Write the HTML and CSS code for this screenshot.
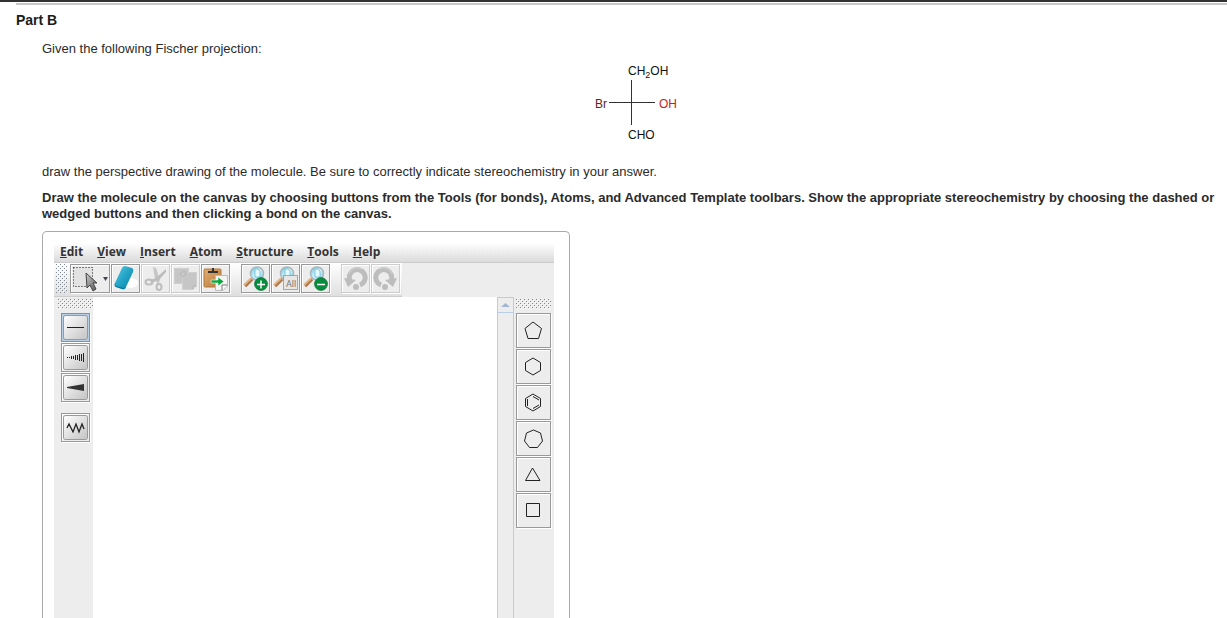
FILE: index.html
```html
<!DOCTYPE html>
<html lang="en">
  <head>
    <meta charset="UTF-8">
    <meta name="viewport" content="width=device-width, initial-scale=1">
    <title>Part B</title>
    <link rel="stylesheet" href="styles.css">
  </head>
  <body>
    <!-- shared symbols -->
    <svg class="defs" width="0" height="0" aria-hidden="true">
      <defs>
        <pattern id="dots" width="4" height="4" patternUnits="userSpaceOnUse">
          <rect width="1" height="1" fill="#7f8994" />
          <rect x="2" y="2" width="1" height="1" fill="#7f8994" />
          <rect x="1" y="1" width="1" height="1" fill="#fff" />
          <rect x="3" y="3" width="1" height="1" fill="#fff" />
        </pattern>
        <linearGradient id="blue" x1="0" y1="0" x2="1" y2="1">
          <stop offset="0" stop-color="#5cc8e2" />
          <stop offset="0.5" stop-color="#22a4c6" />
          <stop offset="1" stop-color="#0a7ea0" />
        </linearGradient>
        <linearGradient id="glass" x1="0" y1="0" x2="1" y2="1">
          <stop offset="0" stop-color="#6fc4dc" />
          <stop offset="0.5" stop-color="#d3f3fb" />
          <stop offset="1" stop-color="#7ccfe6" />
        </linearGradient>
        <linearGradient id="wood" x1="0" y1="0" x2="1" y2="1">
          <stop offset="0" stop-color="#e3ac70" />
          <stop offset="1" stop-color="#b87838" />
        </linearGradient>
        <linearGradient id="arrow" x1="0" y1="0" x2="1" y2="1">
          <stop offset="0" stop-color="#ccc" />
          <stop offset="1" stop-color="#555" />
        </linearGradient>
        <symbol id="lens" viewBox="0 0 27 27">
          <path d="M3 21L10 14" stroke="#a87850" stroke-width="3.500" />
          <path d="M2 20L9 13.500" stroke="#e6b27c" stroke-width="2" />
          <circle cx="15" cy="8.500" r="6.500" fill="url(#glass)" stroke="#a9b6bb" stroke-width="1.500" />
          <path d="M13 4h3l2 2v6h-5z" fill="#e4faff" stroke="#58b4d0" stroke-width=".7" />
        </symbol>
        <symbol id="turn" viewBox="0 0 27 27">
          <path d="M8 16A8 8 0 1 1 18 20" fill="none" stroke="#bdbdbd" stroke-width="5" />
          <path d="M2 13L14 15L6 22Z" fill="#bdbdbd" />
          <circle cx="14" cy="22" r="3" fill="#bdbdbd" />
          <path d="M7 9A9 9 0 0 1 20 4" fill="none" stroke="#d2d2d2" />
        </symbol>
      </defs>
    </svg>

    <div class="topline"></div>
    <main class="part">
      <h2 class="part-title">Part B</h2>
      <div class="question">
        <p>Given the following Fischer projection:</p>
        <svg class="molecule" viewBox="0 0 90 96" role="img" aria-label="Fischer projection">
          <path d="M41.500 23V68M19 45.500H65" stroke="#333" />
          <text x="38" y="18">CH<tspan class="sub" dy="3">2</tspan><tspan dy="-3">OH</tspan></text>
          <text class="bromine" x="5" y="51">Br</text>
          <text class="hydroxyl" x="69" y="51">OH</text>
          <text x="38" y="82">CHO</text>
        </svg>
        <p>draw the perspective drawing of the molecule. Be sure to correctly indicate stereochemistry in your answer.</p>
        <p class="instructions">Draw the molecule on the canvas by choosing buttons from the Tools (for bonds), Atoms, and Advanced Template toolbars. Show the appropriate stereochemistry by choosing the dashed or wedged buttons and then clicking a bond on the canvas.</p>
      </div>

      <div class="editor">
        <div class="menubar">
          <button class="menu"><u>E</u>dit</button>
          <button class="menu"><u>V</u>iew</button>
          <button class="menu"><u>I</u>nsert</button>
          <button class="menu"><u>A</u>tom</button>
          <button class="menu"><u>S</u>tructure</button>
          <button class="menu"><u>T</u>ools</button>
          <button class="menu"><u>H</u>elp</button>
        </div>

        <div class="toolbar-row">
          <div class="toolbar">
            <svg class="grip grip-v"><rect width="100%" height="100%" fill="url(#dots)" /></svg>
            <div class="tools">
              <button class="tool tool-wide" aria-label="Select">
                <svg viewBox="0 0 38 27">
                  <rect x="2.500" y="2.500" width="19" height="19" fill="#e2e2e2" stroke="#111" stroke-dasharray="1 2" />
                  <path d="M15 8L16 23L19 20L22 26L25 24L22 18L26 18Z" fill="url(#arrow)" stroke="#444" />
                  <path d="M32 12H37L34.500 16Z" fill="#445" />
                </svg>
              </button>
              <button class="tool" aria-label="Erase">
                <svg viewBox="0 0 27 27">
                  <ellipse cx="18" cy="18" rx="8" ry="5" fill="#fff" />
                  <path d="M10 3Q11 1 13 1L20 3Q22 4 21 7L14 22Q13 25 10 24L4 22Q2 21 3 18Z" fill="url(#blue)" />
                  <path d="M3 18L4 21L12 23L14 22Q13 25 10 24L4 22Q2 21 3 18Z" fill="#0b7b9c" />
                </svg>
              </button>
              <button class="tool" aria-label="Cut" disabled>
                <svg viewBox="0 0 27 27" fill="none" stroke="#bdbdbd">
                  <path d="M11 2L14 3L18 15L16 20L13 14Z" fill="#c6c6c6" stroke="none" />
                  <path d="M24 4L24 7L17 15L9 18L8 15L14 13Z" fill="#bdbdbd" stroke="none" />
                  <ellipse cx="7" cy="17" rx="3.500" ry="2.500" stroke-width="2" />
                  <ellipse cx="17" cy="22" rx="2.500" ry="3" stroke-width="2" />
                </svg>
              </button>
              <button class="tool" aria-label="Copy" disabled>
                <svg viewBox="0 0 27 27" fill="#c6c6c6" stroke="#cfcfcf">
                  <rect x="2.500" y="3.500" width="14" height="15" />
                  <path d="M10.500 7.500H24.500V21L21 24.500H10.500Z" />
                  <path d="M8 10Q9 6 14 7Q14 12 9 11" fill="none" stroke="#b4b4b4" />
                  <path d="M24 21H21V24" fill="#ddd" stroke="#b4b4b4" />
                </svg>
              </button>
              <button class="tool" aria-label="Paste">
                <svg viewBox="0 0 27 27">
                  <rect x="2" y="4" width="17" height="18" rx="1" fill="url(#wood)" stroke="#b07a42" />
                  <path d="M6 8V6H10V3H12V6H16V8Z" fill="#333" />
                  <path d="M13.500 10.500H25.500V21L21 25.500H13.500Z" fill="#f4f4f4" stroke="#bbb" />
                  <path d="M25 20H20V25" fill="#fff" stroke="#777" />
                  <path d="M9 15H16V12L22 16.500L16 21V18H9Z" fill="#08a83c" stroke="#fff" stroke-width=".6" />
                </svg>
              </button>
            </div>
            <div class="tools">
              <button class="tool" aria-label="Zoom in">
                <svg viewBox="0 0 27 27">
                  <use href="#lens" />
                  <circle cx="19" cy="19" r="6.500" fill="#078b3c" stroke="#05662c" stroke-width=".6" />
                  <path d="M15 19.500H23M19 15.500V23.500" stroke="#fff" stroke-width="1.500" />
                </svg>
              </button>
              <button class="tool" aria-label="Zoom all">
                <svg viewBox="0 0 27 27">
                  <use href="#lens" />
                  <rect x="11.500" y="10.500" width="14" height="14" fill="#e6e6e6" stroke="#666" stroke-dasharray="1 1" />
                  <text class="all" x="14" y="22">All</text>
                </svg>
              </button>
              <button class="tool" aria-label="Zoom out">
                <svg viewBox="0 0 27 27">
                  <use href="#lens" />
                  <circle cx="19" cy="19" r="6.500" fill="#078b3c" stroke="#05662c" stroke-width=".6" />
                  <path d="M15 19.500H23" stroke="#fff" stroke-width="1.500" />
                </svg>
              </button>
            </div>
            <div class="tools">
              <button class="tool" aria-label="Undo" disabled>
                <svg viewBox="0 0 27 27"><use href="#turn" /></svg>
              </button>
              <button class="tool" aria-label="Redo" disabled>
                <svg viewBox="0 0 27 27"><use href="#turn" transform="translate(27 0) scale(-1 1)" /></svg>
              </button>
            </div>
          </div>
        </div>

        <div class="workspace">
          <div class="bonds">
            <svg class="grip grip-h"><rect width="100%" height="100%" fill="url(#dots)" /></svg>
            <button class="tool bond selected" aria-label="Single bond">
              <svg viewBox="0 0 23 23"><path d="M3 11.500H20" stroke="#222" /></svg>
            </button>
            <button class="tool bond" aria-label="Dashed bond">
              <svg viewBox="0 0 23 23"><path d="M3.500 11v1M5.500 11v1M7.500 10v3M9.500 10v3M11.500 9v5M13.500 9v5M15.500 8v7M17.500 8v7M19.500 7v9" stroke="#222" /></svg>
            </button>
            <button class="tool bond" aria-label="Wedge bond">
              <svg viewBox="0 0 23 23"><path d="M3 11L20 8V15L3 12Z" fill="#333" /></svg>
            </button>
            <button class="tool bond chain" aria-label="Chain">
              <svg viewBox="0 0 23 23"><path d="M3 12L5 8L9 16L12 8L15 16L18 8L20 13" fill="none" stroke="#222" stroke-width="1.300" /></svg>
            </button>
          </div>

          <div class="canvas"></div>

          <div class="scrollbar">
            <button class="scroll-up" aria-label="Scroll up">
              <svg viewBox="0 0 15 14"><path d="M7.500 5L12 9H3Z" fill="#a3b8d0" /></svg>
            </button>
          </div>

          <div class="templates">
            <svg class="grip grip-h"><rect width="100%" height="100%" fill="url(#dots)" /></svg>
            <button class="tool template" aria-label="Cyclopentane">
              <svg viewBox="0 0 33 33"><path d="M16 8L24.500 14.500L21.500 24.500H11L8 14.500Z" /></svg>
            </button>
            <button class="tool template" aria-label="Cyclohexane">
              <svg viewBox="0 0 33 33"><path d="M16 8L23.500 12.500V20.500L16 25L8.500 20.500V12.500Z" /></svg>
            </button>
            <button class="tool template" aria-label="Benzene">
              <svg viewBox="0 0 33 33"><path d="M16 8L23.500 12.500V20.500L16 25L8.500 20.500V12.500ZM16 10.500L22 14M22 19L16 22.500M10.500 13V20" /></svg>
            </button>
            <button class="tool template" aria-label="Cycloheptane">
              <svg viewBox="0 0 33 33"><path d="M16.500 8L23.500 11L25.500 19L20.500 25.500H12.500L7.500 19L9.500 11Z" /></svg>
            </button>
            <button class="tool template" aria-label="Cyclopropane">
              <svg viewBox="0 0 33 33"><path d="M15.500 10L23 22.500H8.500Z" /></svg>
            </button>
            <button class="tool template" aria-label="Cyclobutane">
              <svg viewBox="0 0 33 33"><path d="M9.500 9.500H22.500V22.500H9.500Z" /></svg>
            </button>
          </div>
        </div>
      </div>
    </main>
  </body>
</html>
```
FILE: styles.css
```css
* {
  box-sizing: border-box;
}

body {
  display: flex;
  flex-direction: column;
  height: 100vh;
  margin: 0;
  overflow: hidden;
  background: #fff;
  color: #2b2b2b;
  font-family: "Liberation Sans", Arial, sans-serif;
  font-size: 13px;
  line-height: 16px;
}

button {
  margin: 0;
  padding: 0;
  border: 0;
  background: none;
  color: inherit;
  font: inherit;
}

svg {
  display: block;
}

.defs {
  position: absolute;
}

.topline {
  flex: none;
  height: 2px;
  background: #333;
}

.part {
  display: flex;
  flex: 1;
  flex-direction: column;
  min-height: 0;
  margin: 1px 0 0 16px;
  border-top: 2px solid #c8c8c8;
}

.part-title {
  margin: 7px 0 13px;
  color: #1c1c1c;
  font-size: 14px;
  line-height: 16px;
}

.question {
  margin-left: 26px;
}

.question p {
  margin: 0;
}

.molecule {
  width: 90px;
  height: 96px;
  margin: 0 auto 11px;
  fill: #111;
  font-size: 12px;
}

.molecule .sub {
  font-size: 9px;
}

.molecule .bromine {
  fill: #5e2626;
}

.molecule .hydroxyl {
  fill: #d01818;
}

.question .instructions {
  margin: 10px 8px 9px 0;
  font-weight: bold;
}

/* molecule editor */
.editor {
  display: flex;
  flex: 1;
  flex-direction: column;
  width: 528px;
  max-width: 100%;
  margin-left: 26px;
  padding: 11px 15px 0 11px;
  border: 1px solid #aaa;
  border-bottom: 0;
  border-radius: 5px 5px 0 0;
}

.menubar {
  display: flex;
  flex: none;
  gap: 14px;
  height: 20px;
  padding-left: 6px;
  border-bottom: 1px solid #ccc;
  background: linear-gradient(#fff, #dadada);
}

.menu {
  height: 17px;
  color: #333;
  font-family: "Open Sans", sans-serif;
  font-size: 12px;
  font-weight: bold;
  line-height: 16px;
}

.toolbar-row {
  display: flex;
  flex: none;
  height: 34px;
  background: #ededed;
}

.toolbar {
  display: flex;
  gap: 11px;
  padding: 1px 2px 0;
  border-bottom: 1px solid #ccc;
  background: linear-gradient(#fff, #dfdfdf);
}

.grip {
  flex: none;
}

.grip-v {
  width: 11px;
  height: 29px;
  margin-right: -8px;
}

.grip-h {
  width: 35px;
  height: 10px;
  margin: 2px 0 3px;
}

.tools {
  display: flex;
  gap: 1px;
}

.tool {
  flex: none;
  width: 29px;
  height: 29px;
  border: 1px solid #999;
  background: #ededed;
  box-shadow: 1px 1px #fff, inset 1px 1px #fff;
}

.tool svg {
  width: 100%;
  height: 100%;
}

.tool-wide {
  width: 40px;
}

.tool:disabled {
  border-color: #ccc;
}

.all {
  fill: #777;
  font-family: Roboto, sans-serif;
  font-size: 9px;
}

.workspace {
  display: flex;
  flex: 1;
  min-height: 0;
}

.bonds,
.templates {
  display: flex;
  flex: none;
  flex-direction: column;
  gap: 1px;
  align-items: center;
  background: #ededed;
}

.bonds {
  width: 39px;
  padding-left: 3px;
}

.bond {
  padding: 2px;
}

.bond svg {
  width: 23px;
  height: 23px;
  border-radius: 2px;
  background: linear-gradient(135deg, #fff, #c4c4c4);
  box-shadow: 0 0 0 1px #999;
}

.selected {
  border-color: #7d92a8;
  background: #b8cfe5;
  box-shadow: 1px 1px #fff;
}

.chain {
  margin-top: 10px;
}

.canvas {
  flex: 1;
  background: #fff;
}

.scrollbar {
  flex: none;
  width: 17px;
  border: 1px solid #c0cbe0;
  border-width: 1px 1px 0;
  background: #ededed;
}

.scroll-up {
  display: block;
  width: 100%;
  height: 15px;
  border-bottom: 1px solid #b8cfe5;
}

.templates {
  width: 40px;
  padding-right: 1px;
}

.template {
  width: 35px;
  height: 35px;
}

.template svg {
  fill: none;
  stroke: #222;
}
```
